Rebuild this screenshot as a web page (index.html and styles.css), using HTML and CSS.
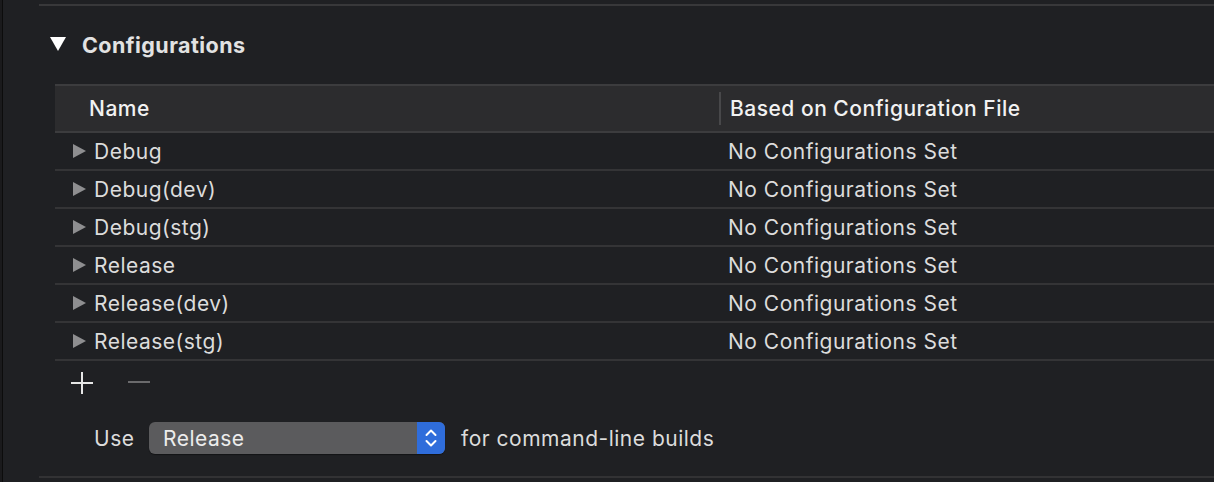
FILE: index.html
```html
<!DOCTYPE html>
<html>
<head>
<meta charset="utf-8">
<link rel="stylesheet" href="styles.css">
</head>
<body>
<div class="page">
  <div class="edge"></div>
  <div class="main">
    <div class="topline"></div>
    <div class="section-title">
      <span class="disclosure-open"></span>
      <span class="title">Configurations</span>
    </div>
    <div class="table">
      <div class="thead">
        <div class="th th-name">Name</div>
        <div class="th th-based"><span class="divider"></span>Based on Configuration File</div>
      </div>
      <div class="row"><div class="c-name"><span class="tri"></span>Debug</div><div class="c-based">No Configurations Set</div></div>
      <div class="row"><div class="c-name"><span class="tri"></span>Debug(dev)</div><div class="c-based">No Configurations Set</div></div>
      <div class="row"><div class="c-name"><span class="tri"></span>Debug(stg)</div><div class="c-based">No Configurations Set</div></div>
      <div class="row"><div class="c-name"><span class="tri"></span>Release</div><div class="c-based">No Configurations Set</div></div>
      <div class="row"><div class="c-name"><span class="tri"></span>Release(dev)</div><div class="c-based">No Configurations Set</div></div>
      <div class="row"><div class="c-name"><span class="tri"></span>Release(stg)</div><div class="c-based">No Configurations Set</div></div>
      <div class="tools">
        <svg class="plus" width="22" height="22" viewBox="0 0 22 22"><path d="M11 0V22M0 11H22" stroke="#e6e6e6" stroke-width="2"/></svg>
        <svg class="minus" width="22" height="4" viewBox="0 0 22 4"><path d="M0 2H22" stroke="#6a6a6c" stroke-width="2"/></svg>
      </div>
      <div class="userow">
        <span class="use">Use</span>
        <div class="popup">
          <span class="popup-label">Release</span>
          <span class="popup-arrows">
            <svg width="14" height="22" viewBox="0 0 14 22"><path d="M2.5 8L7 3.5L11.5 8M2.5 14L7 18.5L11.5 14" fill="none" stroke="#ffffff" stroke-width="2" stroke-linecap="round" stroke-linejoin="round"/></svg>
          </span>
        </div>
        <span class="for">for command-line builds</span>
      </div>
    </div>
    <div class="bottomline"></div>
  </div>
</div>
</body>
</html>
```
FILE: styles.css
```css
* { box-sizing: border-box; }
html, body { margin: 0; padding: 0; }
body {
  background: #1f2023;
  font-family: "Inter", "Liberation Sans", sans-serif;
  color: #dedede;
  width: 1214px;
  height: 482px;
  overflow: hidden;
}
.page { display: flex; height: 482px; }
.edge {
  width: 3px;
  background: #1a1a1c;
  border-right: 1px solid #0c0c0c;
  flex: none;
}
.main {
  flex: 1;
  padding-left: 36px;
  display: flex;
  flex-direction: column;
}
.topline {
  margin-top: 4px;
  height: 2px;
  background: #38383a;
}
.section-title {
  height: 78px;
  display: flex;
  align-items: center;
  padding-left: 11px;
}
.disclosure-open {
  width: 0; height: 0;
  border-left: 8px solid transparent;
  border-right: 8px solid transparent;
  border-top: 14px solid #ffffff;
  margin-top: -2px;
}
.title {
  margin-left: 16px;
  font-weight: 700;
  font-size: 21.5px;
  letter-spacing: 0.45px;
  color: #e2e2e2;
  margin-top: -1px;
}
.table {
  margin-left: 16px;
  border-top: 2px solid #3c3c3e;
  flex: 1;
}
.thead {
  height: 47px;
  background: #2c2c2e;
  border-bottom: 2px solid #3c3c3e;
  display: flex;
  align-items: center;
  color: #f2f2f2;
  font-size: 21px;
  letter-spacing: 0.5px;
  font-weight: 500;
}
.th-name { width: 664px; padding-left: 34px; }
.th-based { display: flex; align-items: center; }
.divider {
  width: 2px; height: 33px;
  background: #48484a;
  margin-right: 9px;
}
.row {
  height: 38px;
  border-bottom: 2px solid #343436;
  display: flex;
  align-items: center;
  font-size: 21px;
  letter-spacing: 0.5px;
  color: #dcdcdc;
}
.c-name {
  width: 673px;
  padding-left: 18px;
  display: flex;
  align-items: center;
}
.tri {
  width: 0; height: 0;
  border-top: 7px solid transparent;
  border-bottom: 7px solid transparent;
  border-left: 13px solid #8e8e90;
  margin-right: 8px;
}
.tools {
  height: 43px;
  display: flex;
  align-items: center;
  padding-left: 16px;
}
.minus { margin-left: 35px; margin-top: -1px; }
.userow {
  height: 68px;
  display: flex;
  align-items: center;
  padding-left: 39px;
  font-size: 21px;
  letter-spacing: 0.5px;
  color: #dcdcdc;
}
.use { width: 55px; }
.popup {
  width: 296px;
  height: 32px;
  border-radius: 6px;
  background: #5b5b5d;
  display: flex;
  align-items: center;
  overflow: hidden;
  box-shadow: 0 1px 1px rgba(0,0,0,0.4);
}
.popup-label { flex: 1; padding-left: 14px; color: #ececec; }
.popup-arrows {
  width: 28px; height: 32px;
  background: #2f6ddb;
  display: flex;
  align-items: center;
  justify-content: center;
}
.for { margin-left: 16px; }
.bottomline {
  height: 2px;
  background: #323234;
  margin-bottom: 4px;
}
```
